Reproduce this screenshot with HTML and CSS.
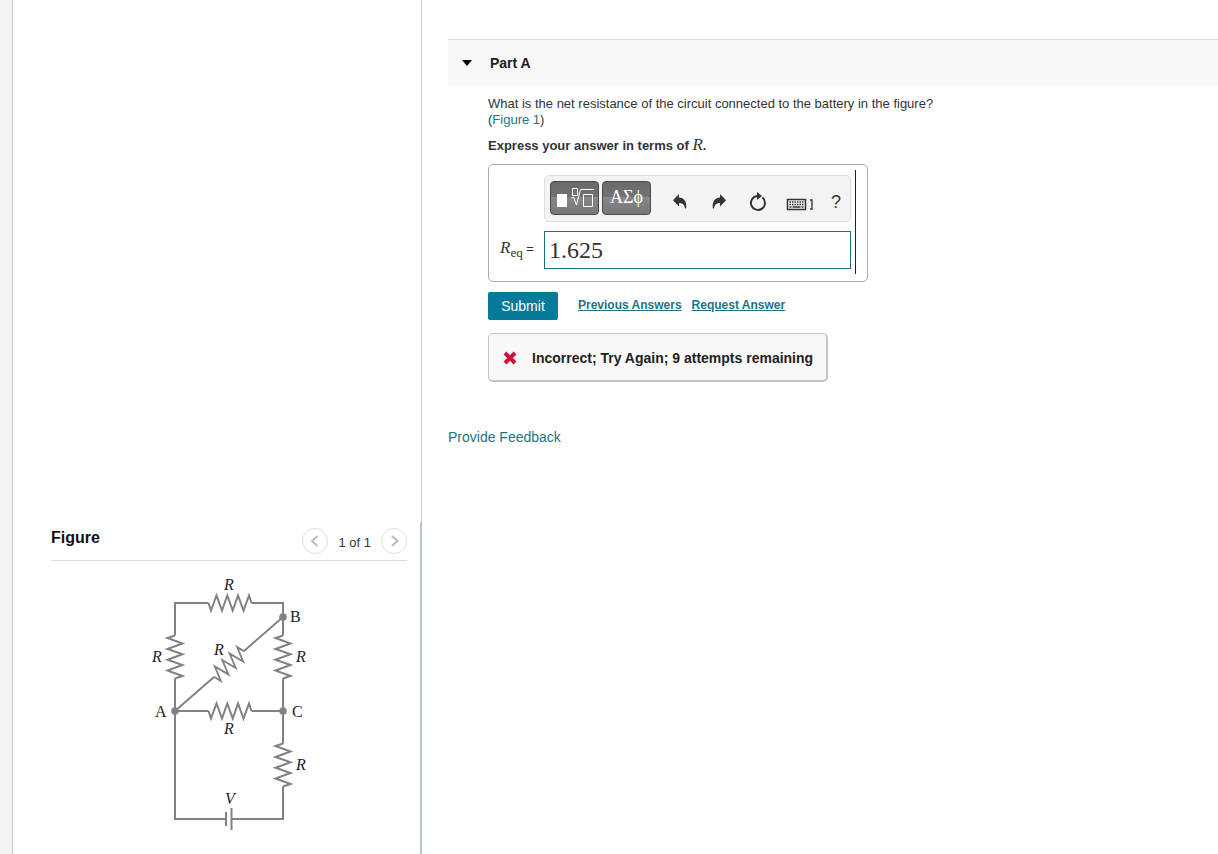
FILE: index.html
```html
<!DOCTYPE html>
<html lang="en">
<head>
	<meta charset="utf-8">
	<title>Part A</title>
	<link rel="stylesheet" href="styles.css">
</head>
<body>
	<div class="rail"></div>

	<!-- left column with the figure at the bottom -->
	<aside class="left-column">
		<section class="figure-panel">
			<div class="figure-header">
				<h2>Figure</h2>
				<div class="pager">
					<button type="button" class="pager-button" aria-label="Previous figure">
						<svg width="24" height="24" viewBox="0 0 24 24"><path d="M14.500 7 9 12l5.500 5"/></svg>
					</button>
					<span class="pager-text">1 of 1</span>
					<button type="button" class="pager-button" aria-label="Next figure">
						<svg width="24" height="24" viewBox="0 0 24 24"><path d="M10 7l5.500 5L10 17"/></svg>
					</button>
				</div>
			</div>
			<svg class="circuit" width="182" height="270" viewBox="-2 0 182 270">
				<defs>
					<path id="resistor" d="M-21.500 0L-19 7.500-13.500-7.500-8 7.500-2.700-7.500 2.700 7.500 8-7.500 13.500 7.500 19-7.500 21.500 0"/>
				</defs>
				<!-- wires -->
				<g class="wire">
					<path d="M68.500 33H35V65.500M35 108.500V249H86M92 249H143V216.500M143 173.500V108.500M143 65.500V33H111.500"/>
					<path d="M35 141H68.500M111.500 141H143M35 141L74.300 106.800M103.700 81.200L143 47"/>
					<path d="M86 242v14M91.500 238v22"/>
					<use href="#resistor" transform="translate(90 33)"/>
					<use href="#resistor" transform="translate(90 141)"/>
					<use href="#resistor" transform="translate(35 87) rotate(90)"/>
					<use href="#resistor" transform="translate(143 87) rotate(90)"/>
					<use href="#resistor" transform="translate(143 195) rotate(90)"/>
					<use href="#resistor" transform="translate(89 94) rotate(-41) scale(.91 1)"/>
				</g>
				<!-- nodes -->
				<g class="node">
					<circle cx="143" cy="47" r="3.800"/>
					<circle cx="35" cy="141" r="3.800"/>
					<circle cx="143" cy="141" r="3.800"/>
				</g>
				<g class="part-name">
					<text x="84" y="20">R</text>
					<text x="12" y="92">R</text>
					<text x="74" y="85">R</text>
					<text x="156" y="92">R</text>
					<text x="84" y="164">R</text>
					<text x="156" y="200">R</text>
					<text x="85" y="234">V</text>
				</g>
				<g class="node-name">
					<text x="150" y="52">B</text>
					<text x="15" y="147">A</text>
					<text x="152" y="147">C</text>
				</g>
			</svg>
		</section>
	</aside>

	<!-- right column with the question -->
	<main class="right-column">
		<header class="part-header">
			<svg width="10" height="6" viewBox="0 0 10 6"><path d="M0 0h10L5 6z"/></svg>
			<h2>Part A</h2>
		</header>

		<div class="part-body">
			<p class="question">What is the net resistance of the circuit connected to the battery in the figure?<br>(<a href="#">Figure 1</a>)</p>
			<p class="instructions">Express your answer in terms of <i class="math">R</i>.</p>

			<form>
				<div class="answer-box">
					<div class="answer-inner">
						<div class="toolbar">
							<button type="button" class="palette" aria-label="Templates">
								<svg width="46" height="32" viewBox="0 0 46 32">
									<path d="M6 12h10v13H6z" fill="#fff"/>
									<path d="M21.500 6.500h5v7h-5zM20.500 16l2-1 3 8 4-15.500H43M32.500 12.500h9v12h-9z" fill="none" stroke="#fff"/>
								</svg>
							</button>
							<button type="button" class="palette greek">ΑΣϕ</button>
							<button type="button" class="tool undo" aria-label="Undo">
								<svg width="16" height="16" viewBox="0 0 16 16"><path d="M7 0v3.500c5 .3 8 4 7.200 10.500-.2.800-1 .8-1.300 0C12.500 10.500 10.500 9 7 9v3.500L1 6.200z"/></svg>
							</button>
							<button type="button" class="tool redo" aria-label="Redo">
								<svg width="16" height="16" viewBox="0 0 16 16"><path d="M9 0v3.500c-5 .3-8 4-7.200 10.500.2.800 1 .8 1.300 0C3.500 10.500 5.500 9 9 9v3.500l6-6.300z"/></svg>
							</button>
							<button type="button" class="tool reset" aria-label="Reset">
								<svg width="18" height="20" viewBox="0 0 18 20"><path d="M13.500 5.600A7 7 0 1 1 8 4" fill="none" stroke="#333" stroke-width="2"/><path d="M8 0l5 4-5 4z"/></svg>
							</button>
							<button type="button" class="tool keyboard" aria-label="Keyboard shortcuts">
								<svg width="28" height="14" viewBox="0 0 28 14">
									<path d="M1.500 2.500h18v10h-18z" fill="none" stroke="#333" stroke-width="1.500"/>
									<path d="M3.500 5h14M3.500 7.500h14" fill="none" stroke="#333" stroke-width="1.500" stroke-dasharray="1.500 1"/>
									<path d="M3.500 10h2M6.500 10h8M15.500 10h2M24 3h2v9h-2" fill="none" stroke="#333" stroke-width="1.300"/>
								</svg>
							</button>
							<button type="button" class="tool help" aria-label="Help">?</button>
						</div>
						<label class="answer-label" for="answer"><i>R</i><sub>eq</sub> =</label>
						<input class="answer-input" id="answer" type="text" value="1.625">
					</div>
				</div>

				<div class="actions">
					<button type="submit" class="submit">Submit</button>
					<a href="#">Previous Answers</a>
					<a href="#">Request Answer</a>
				</div>
			</form>

			<div class="feedback">
				<svg width="14" height="14" viewBox="0 0 14 14"><path d="M2 2l10 10M12 2L2 12"/></svg>
				<span>Incorrect; Try Again; 9 attempts remaining</span>
			</div>
		</div>

		<a class="provide-feedback" href="#">Provide Feedback</a>
	</main>
</body>
</html>
```
FILE: styles.css
```css
* {
	box-sizing: border-box;
}

body {
	margin: 0;
	display: flex;
	min-height: 100vh;
	background: #fff;
	color: #333;
	font-family: "Liberation Sans", Arial, sans-serif;
	font-size: 13px;
	line-height: 16px;
}

h2,
p {
	margin: 0;
}

button {
	padding: 0;
	font-family: inherit;
	cursor: pointer;
}

svg {
	display: block;
}

a {
	color: #1f7389;
}

.rail {
	flex: none;
	width: 13px;
	background: #f4f4f4;
	border-right: 1px solid #ccc;
}

/* left column */
.left-column {
	flex: none;
	width: 409px;
	display: flex;
	flex-direction: column;
	justify-content: flex-end;
	border-right: 1px solid #c8cdd1;
}

.figure-panel {
	margin-right: -1px;
	padding: 4px 13px 14px 38px;
	border-right: 2px solid #b3c6d3;
}

.figure-header {
	display: flex;
	justify-content: space-between;
	height: 35px;
	margin-bottom: 9px;
	border-bottom: 1px solid #d9dddf;
}

.figure-header h2 {
	color: #111;
	font-size: 16px;
	line-height: 24px;
}

.pager {
	display: flex;
	align-items: center;
	gap: 10px;
	height: 30px;
}

.pager-button {
	width: 26px;
	height: 26px;
	background: #fff;
	border: 1px solid #ddd;
	border-radius: 50%;
}

.pager-button path {
	fill: none;
	stroke: #bbb;
	stroke-width: 2;
}

.pager-text {
	padding-top: 3px;
}

/* circuit drawing */
.circuit {
	margin: 0 auto;
	font-family: "Liberation Serif", "Times New Roman", serif;
	font-size: 16px;
}

.wire {
	fill: none;
	stroke: #808184;
	stroke-width: 2;
}

.node {
	fill: #808184;
}

.part-name {
	font-style: italic;
}

.part-name,
.node-name {
	fill: #222;
}

/* right column */
.right-column {
	flex: 1;
	min-width: 0;
	padding: 39px 0 0 26px;
}

.part-header {
	display: flex;
	align-items: center;
	gap: 18px;
	height: 47px;
	padding-left: 14px;
	background: #f8f8f8;
	border-top: 1px solid #ddd;
}

.part-header h2 {
	color: #222;
	font-size: 14px;
}

.part-body {
	padding: 10px 0 0 40px;
}

.question a {
	text-decoration: none;
}

.instructions {
	margin: 9px 0 10px;
	font-weight: bold;
	line-height: 17px;
}

.math {
	font-family: "Liberation Serif", serif;
	font-size: 17px;
	font-weight: normal;
	line-height: 16px;
}

/* answer box */
.answer-box {
	width: 380px;
	max-width: 100%;
	padding: 5px 11px 7px;
	border: 1px solid #aaa;
	border-radius: 5px;
}

.answer-inner {
	display: grid;
	grid-template-columns: 44px minmax(0, 1fr);
	row-gap: 9px;
	padding: 5px 4px 5px 0;
	border-right: 1px solid #222;
}

.toolbar {
	grid-column: 2;
	display: flex;
	height: 47px;
	padding: 5px 0 5px 5px;
	background: #f3f3f3;
	border: 1px solid #ddd;
	border-radius: 5px;
}

.palette {
	flex: none;
	width: 49px;
	height: 34px;
	margin-right: 3px;
	background: linear-gradient(#6a6a6d, #727275 48%, #87878b 48%, #77777a);
	border: 1px solid #4a4a4c;
	border-radius: 4px;
	color: #fff;
}

.greek {
	padding-bottom: 2px;
	font-family: "Liberation Serif", serif;
	font-size: 18px;
}

.tool {
	display: flex;
	flex: none;
	align-items: center;
	justify-content: center;
	width: 39px;
	height: 42px;
	background: none;
	border: 0;
	color: #333;
	fill: #333;
}

.undo {
	margin-left: 6px;
}

.keyboard {
	width: 46px;
	padding-top: 3px;
}

.help {
	width: 26px;
	font-size: 18px;
}

.answer-label {
	align-self: center;
	padding-bottom: 3px;
	white-space: nowrap;
	line-height: 20px;
}

.answer-label i {
	font-family: "Liberation Serif", serif;
	font-size: 17px;
}

.answer-label sub {
	font-family: "Liberation Serif", serif;
	font-size: 13px;
	line-height: 0;
}

.answer-input {
	width: 100%;
	height: 38px;
	padding: 0 4px;
	border: 1px solid #1f6f79;
	color: #333;
	font-family: "Liberation Serif", serif;
	font-size: 24px;
}

/* submit row */
.actions {
	display: flex;
	gap: 10px;
	margin: 10px 0 13px;
	font-size: 12px;
	font-weight: bold;
	line-height: 26px;
}

.submit {
	width: 70px;
	height: 28px;
	margin-right: 10px;
	background: #057a9a;
	border: 0;
	border-radius: 2px;
	color: #fff;
	font-size: 14px;
}

.feedback {
	display: flex;
	align-items: center;
	gap: 15px;
	width: fit-content;
	height: 49px;
	padding: 1px 13px 0 14px;
	background: #f8f8f8;
	border: 1px solid #c4c4c4;
	border-right-width: 2px;
	border-bottom-width: 2px;
	border-radius: 5px;
	color: #222;
	font-size: 14px;
	font-weight: bold;
}

.feedback path {
	stroke: #d0103a;
	stroke-width: 4;
}

.provide-feedback {
	display: inline-block;
	margin-top: 47px;
	font-size: 14px;
	text-decoration: none;
}
```
